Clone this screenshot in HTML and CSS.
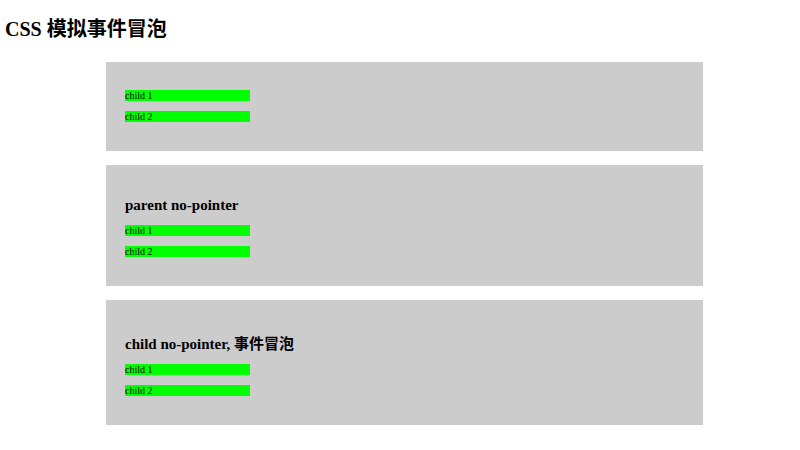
FILE: index.html
```html
<!DOCTYPE html>
<html>
<head>
<meta charset="utf-8">
<link rel="stylesheet" href="styles.css">
</head>
<body>
<h1 class="title">CSS 模拟事件冒泡</h1>
<div class="parent">
  <div class="child">child 1</div>
  <div class="child">child 2</div>
</div>
<div class="parent">
  <h3 class="head">parent no-pointer</h3>
  <div class="child">child 1</div>
  <div class="child">child 2</div>
</div>
<div class="parent">
  <h3 class="head">child no-pointer, 事件冒泡</h3>
  <div class="child">child 1</div>
  <div class="child">child 2</div>
</div>
</body>
</html>
```
FILE: styles.css
```css
body {
  margin: 0;
  padding: 0 5px;
  font-family: "Liberation Serif", "Noto Sans CJK SC", serif;
  color: #000;
  background: #fff;
}
.title {
  font-size: 20px;
  font-weight: bold;
  margin: 13px 0 20px 0;
}
.parent {
  width: 597px;
  box-sizing: border-box;
  margin: 0 0 14px 101px;
  padding: 18px 19px 19px 19px;
  background: #cccccc;
}
.head {
  font-size: 15px;
  font-weight: bold;
  margin: 14px 0 11px 0;
}
.child {
  width: 125px;
  font-size: 10px;
  background: #00ff00;
  margin: 10px 0;
}
```
